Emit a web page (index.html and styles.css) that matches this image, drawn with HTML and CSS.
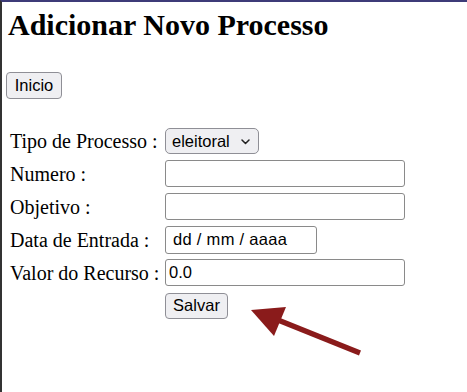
FILE: index.html
```html
<!DOCTYPE html>
<html lang="pt">
<head>
<meta charset="utf-8">
<title>Adicionar Novo Processo</title>
<link rel="stylesheet" href="styles.css">
</head>
<body>
<div class="frame">
  <h2 class="title">Adicionar Novo Processo</h2>
  <button class="btn btn-home" type="button">Inicio</button>
  <form class="form">
    <label class="label" for="tipo">Tipo de Processo :</label>
    <div class="field">
      <span class="select-wrap">
        <select id="tipo" class="select">
          <option>eleitoral</option>
        </select>
        <svg class="chev" width="9" height="6" viewBox="0 0 9 6"><path d="M1 1 L4.5 4.5 L8 1" fill="none" stroke="#222" stroke-width="1.5" stroke-linecap="round" stroke-linejoin="round"/></svg>
      </span>
    </div>
    <label class="label" for="numero">Numero :</label>
    <div class="field"><input id="numero" class="input" type="text"></div>
    <label class="label" for="objetivo">Objetivo :</label>
    <div class="field"><input id="objetivo" class="input" type="text"></div>
    <label class="label" for="data">Data de Entrada :</label>
    <div class="field"><div id="data" class="input input-date">dd / mm / aaaa</div></div>
    <label class="label" for="valor">Valor do Recurso :</label>
    <div class="field"><input id="valor" class="input input-valor" type="text" value="0.0"></div>
    <span class="label"></span>
    <div class="field"><button class="btn btn-save" type="button">Salvar</button></div>
  </form>
  <svg class="arrow" width="130" height="60" viewBox="240 300 130 60">
    <line x1="360" y1="353" x2="278" y2="320" stroke="#8a1b1b" stroke-width="5.5"/>
    <polygon points="251,310 286,307 274,336" fill="#8a1b1b"/>
  </svg>
</div>
</body>
</html>
```

FILE: styles.css
```css
html, body {
  margin: 0;
  padding: 0;
  background: #ffffff;
}

.frame {
  position: relative;
  box-sizing: border-box;
  width: 467px;
  height: 392px;
  border-top: 2px solid #3d3b78;
  border-left: 2px solid #333333;
  padding: 0 0 0 4px;
  font-family: "Liberation Serif", "Times New Roman", serif;
  color: #000;
  overflow: hidden;
}

.title {
  margin: 6px 0 0 2px;
  font-size: 30px;
  font-weight: bold;
  line-height: 34px;
}

.btn {
  box-sizing: border-box;
  font-family: "Liberation Sans", Arial, sans-serif;
  font-size: 16.5px;
  color: #000;
  background: #efeff2;
  border: 1px solid #8f8f96;
  border-radius: 4px;
  padding: 0;
  margin: 0;
}

.btn-home {
  display: block;
  margin-top: 30px;
  width: 56px;
  height: 27px;
}

.form {
  display: grid;
  grid-template-columns: 155px auto;
  grid-auto-rows: 33px;
  align-items: center;
  margin-top: 25px;
  padding-left: 4px;
}

.label {
  font-size: 20px;
  line-height: 24px;
  white-space: nowrap;
}

.field {
  display: flex;
  align-items: center;
}

.select-wrap {
  position: relative;
  display: inline-block;
}

.select {
  appearance: none;
  -webkit-appearance: none;
  box-sizing: border-box;
  width: 94px;
  height: 26px;
  margin: 0;
  padding: 0 0 0 6px;
  font-family: "Liberation Sans", Arial, sans-serif;
  font-size: 16.5px;
  color: #000;
  background: #efeff2;
  border: 1px solid #8f8f96;
  border-radius: 5px;
}

.chev {
  position: absolute;
  right: 9px;
  top: 11px;
  pointer-events: none;
}

.input {
  box-sizing: border-box;
  width: 240px;
  height: 27px;
  margin: 0;
  padding: 0 4px;
  font-family: "Liberation Sans", Arial, sans-serif;
  font-size: 16.5px;
  color: #000;
  background: #fff;
  border: 1px solid #8a8a8a;
  border-radius: 3px;
  outline: none;
}

.input-date {
  width: 152px;
  height: 28px;
  padding: 0 7px;
  display: flex;
  align-items: center;
  letter-spacing: 0.3px;
}

.input-valor {
  padding-left: 3px;
}

.btn-save {
  width: 63px;
  height: 26px;
}

.arrow {
  position: absolute;
  left: 238px;
  top: 298px;
}
```
